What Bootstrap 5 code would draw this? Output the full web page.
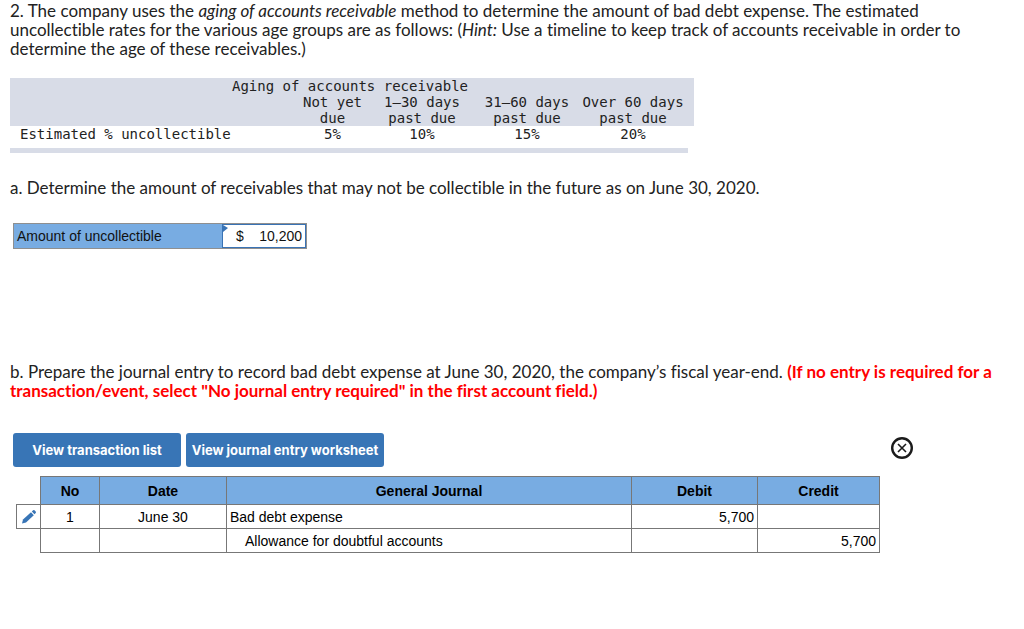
<!DOCTYPE html>
<html lang="en">
<head>
<meta charset="utf-8">
<meta name="viewport" content="width=device-width, initial-scale=1">
<title>Bad debt expense</title>
<link rel="stylesheet" href="https://cdn.jsdelivr.net/npm/bootstrap@5.3.0/dist/css/bootstrap.min.css">
<style>
  body { font-family: Lato, sans-serif; font-size: 17px; line-height: 19px; color: #222; background: #fff; font-variant-ligatures: none; }
  main { padding: 1px 12px 24px 10px; }
  .arial { font-family: "Liberation Sans", Arial, sans-serif; font-size: 14px; }

  .aging { font-family: "DejaVu Sans Mono", monospace; font-size: 14px; line-height: 16px; max-width: 684px; margin-top: 20px; }
  .aging table { width: 100%; table-layout: fixed; }
  .aging thead { background: #d8dce7; }
  .aging th, .aging td { font-weight: 400; text-align: center; padding: 0; white-space: nowrap; }
  .aging .row-name { text-align: left; padding-left: 10px; }
  .aging .group-name { text-align: left; }
  .aging .first { padding-left: 56px; }
  .aging .third { padding-left: 8px; }
  .aging .last { padding-right: 7px; }
  .aging .rule { height: 5px; margin: 6px 6px 0 0; background: #d8dce7; }

  .part-a { margin-top: 25px; }
  .amount { max-width: 294px; margin: 26px 0 0 3px; border: 1px solid #8f8f8f; color: #111; }
  .amount label { flex: 0 0 208px; background: #78ace2; padding: 3px 3px 2px; line-height: 19px; }
  .amount .answer { position: relative; border: 1px solid #3973b5; padding-left: 13px; }
  .amount .answer::before { content: ""; position: absolute; left: 0; top: 0; border-left: 5px solid #3973b5; border-top: 3px solid transparent; border-bottom: 4px solid transparent; }
  .amount input { min-width: 0; border: 0; padding: 0 3px; text-align: right; color: inherit; line-height: 19px; height: 21px; }

  .part-b { margin-top: 113px; }
  .part-b strong { color: #f00; font-weight: 700; }

  .tools { max-width: 901px; margin: 33px 0 0 3px; }
  .btn-view { --bs-btn-color: #fff; --bs-btn-bg: #3875b6; --bs-btn-hover-color: #fff; --bs-btn-hover-bg: #2d629c; --bs-btn-border-color: transparent; --bs-btn-padding-x: 0; --bs-btn-padding-y: 6px; --bs-btn-font-size: 13px; --bs-btn-line-height: 20px; --bs-btn-border-radius: 3px; font-family: Inter, sans-serif; font-weight: 700; height: 34px; }
  .btn-list { width: 168px; margin-right: 5px; }
  .btn-sheet { width: 198px; }

  .journal { width: 100%; max-width: 864px; margin: 9px 0 0 6px; table-layout: fixed; color: #000; line-height: 16px; }
  .journal th, .journal td { border: 1px solid #777; padding: 0 3px; height: 24px; }
  .journal thead th { background: #78ace2; height: 28px; text-align: center; }
  .journal .bare { border: 0; background: none; }
  .journal .indent { padding-left: 18px; }
</style>
<script src="https://cdn.jsdelivr.net/npm/bootstrap@5.3.0/dist/js/bootstrap.bundle.min.js"></script>
</head>
<body>
<main>
  <p class="m-0">2. The company uses the <em>aging of accounts receivable</em> method to determine the amount of bad debt expense. The estimated uncollectible rates for the various age groups are as follows: (<em>Hint:</em> Use a timeline to keep track of accounts receivable in order to determine the age of these receivables.)</p>

  <div class="aging">
    <table>
      <colgroup><col style="width:222px"><col style="width:145px"><col style="width:90px"><col style="width:112px"><col></colgroup>
      <thead>
        <tr><th></th><th class="group-name" colspan="4" scope="colgroup">Aging of accounts receivable</th></tr>
        <tr>
          <th></th>
          <th class="first" scope="col">Not yet<br>due</th>
          <th scope="col">1–30 days<br>past due</th>
          <th class="third" scope="col">31–60 days<br>past due</th>
          <th class="last" scope="col">Over 60 days<br>past due</th>
        </tr>
      </thead>
      <tbody>
        <tr><th class="row-name" scope="row">Estimated % uncollectible</th><td class="first">5%</td><td>10%</td><td class="third">15%</td><td class="last">20%</td></tr>
      </tbody>
    </table>
    <div class="rule"></div>
  </div>

  <p class="part-a mb-0">a. Determine the amount of receivables that may not be collectible in the future as on June 30, 2020.</p>

  <div class="amount arial d-flex">
    <label for="amount">Amount of uncollectible</label>
    <div class="answer d-flex align-items-center flex-grow-1 w-100">
      <span>$</span>
      <input class="flex-grow-1 w-100" id="amount" type="text" value="10,200">
    </div>
  </div>

  <p class="part-b mb-0">b. Prepare the journal entry to record bad debt expense at June 30, 2020, the company’s fiscal year-end. <strong>(If no entry is required for a transaction/event, select "No journal entry required" in the first account field.)</strong></p>

  <div class="tools d-flex align-items-start">
    <button type="button" class="btn btn-view btn-list text-nowrap">View transaction list</button>
    <button type="button" class="btn btn-view btn-sheet text-nowrap">View journal entry worksheet</button>
    <button type="button" class="btn p-0 border-0 d-flex ms-auto mt-1" aria-label="Close">
      <svg width="24" height="24" viewBox="0 0 24 24" fill="none" stroke="#1b1b1b"><circle cx="12" cy="11" r="9.800" stroke-width="2.400"/><path d="M8 7l8 8M16 7l-8 8" stroke-width="1.600"/></svg>
    </button>
  </div>

  <table class="journal arial">
    <colgroup><col style="width:24px"><col style="width:59px"><col style="width:127px"><col><col style="width:126px"><col style="width:122px"></colgroup>
    <thead>
      <tr><td class="bare"></td><th scope="col">No</th><th scope="col">Date</th><th scope="col">General Journal</th><th scope="col">Debit</th><th scope="col">Credit</th></tr>
    </thead>
    <tbody>
      <tr>
        <td class="p-0"><button type="button" class="btn p-0 border-0 d-flex mx-auto" aria-label="Edit entry 1"><svg width="16" height="16" viewBox="0 0 16 16" fill="#3875b6"><path d="M1 14.500l1-4 8-7.200 2.800 2.900L5 13.500z"/><path d="M10.800 2.600l1.300-1.300q.7-.6 1.400 0l1.200 1.200q.6.700 0 1.400l-1.200 1.300z"/></svg></button></td>
        <td class="text-center">1</td><td class="text-center">June 30</td><td>Bad debt expense</td><td class="text-end">5,700</td><td></td>
      </tr>
      <tr><td class="bare"></td><td></td><td></td><td class="indent">Allowance for doubtful accounts</td><td></td><td class="text-end">5,700</td></tr>
    </tbody>
  </table>
</main>
</body>
</html>
